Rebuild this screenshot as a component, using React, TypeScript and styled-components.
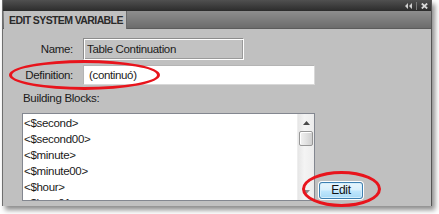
import React from 'react';
import styled, { createGlobalStyle } from 'styled-components';

const FONT = '"Liberation Sans", Arial, sans-serif';

const GlobalStyle = createGlobalStyle`
  html, body {
    margin: 0;
    padding: 0;
    background: #ffffff;
  }
  body {
    font-family: ${FONT};
  }
`;

// ===== WINDOW =====
const Page = styled.div`
  width: 439px;
  height: 214px;
  overflow: hidden;
  padding-left: 2px;
  box-sizing: border-box;
`;

const Window = styled.div`
  position: relative;
  width: 430px;
  height: 206px;
  display: flex;
  flex-direction: column;
  background: #c0c0c0;
  border-left: 1px solid #6e6e6e;
  border-right: 1px solid #555555;
  box-sizing: border-box;
  box-shadow: 3px 4px 5px rgba(0, 0, 0, 0.45);
`;

const TopBar = styled.div`
  height: 11px;
  display: flex;
  align-items: center;
  justify-content: flex-end;
  gap: 4px;
  padding-right: 3px;
  background: linear-gradient(#505050, #2c2c2c);
`;

const BarButton = styled.svg`
  display: block;
`;

const BarDivider = styled.div`
  width: 1px;
  height: 8px;
  background: #7a7a7a;
`;

const TabRow = styled.div`
  height: 17px;
  display: flex;
  background: linear-gradient(#8e8e8e, #6c6c6c);
  border-bottom: 1px solid #5c5c5c;
`;

const Tab = styled.div`
  width: 123px;
  margin-left: 1px;
  margin-bottom: -1px;
  display: flex;
  align-items: center;
  padding-left: 5px;
  box-sizing: border-box;
  background: #c0c0c0;
  border-right: 1px solid #6a6a6a;
  font-family: ${FONT};
  font-size: 10.5px;
  letter-spacing: -0.6px;
  font-weight: 700;
  color: #2a2a2a;
  white-space: nowrap;
`;

const Body = styled.div`
  flex: 1;
  display: flex;
  flex-direction: column;
  padding-top: 9px;
`;

// ===== FORM =====
const FormGrid = styled.div`
  display: grid;
  grid-template-columns: 70px 232px;
  column-gap: 10px;
  row-gap: 5px;
  align-items: center;
`;

const Label = styled.div`
  text-align: right;
  font-size: 11.5px;
  letter-spacing: -0.3px;
  color: #1a1a1a;
  white-space: nowrap;
`;

const Field = styled.div<{ $readOnly?: boolean }>`
  height: ${p => (p.$readOnly ? '22px' : '20px')};
  width: ${p => (p.$readOnly ? '161px' : '232px')};
  box-sizing: border-box;
  display: flex;
  align-items: center;
  padding-left: ${p => (p.$readOnly ? '3px' : '5px')};
  font-size: 11.5px;
  letter-spacing: -0.35px;
  color: #1a1a1a;
  white-space: nowrap;
  background: ${p => (p.$readOnly ? '#c2c2c2' : '#ffffff')};
  border: 1px solid;
  border-color: ${p => (p.$readOnly ? '#8c8c8c #ffffff #ffffff #8c8c8c' : '#b4b4b4 #d8d8d8 #d8d8d8 #b4b4b4')};
  box-shadow: ${p => (p.$readOnly ? 'inset 1px 1px 0 #ffffff, inset -1px -1px 0 #9a9a9a' : 'none')};
`;

const SectionLabel = styled(Label)`
  text-align: left;
  padding-left: 20px;
  margin-top: 6px;
  line-height: 14px;
`;

const ListRow = styled.div`
  display: flex;
  align-items: flex-end;
  margin-top: 8px;
  padding-left: 19px;
`;

const ListBox = styled.div`
  width: 293px;
  height: 88px;
  box-sizing: border-box;
  display: flex;
  background: #ffffff;
  border: 1px solid #838790;
`;

const Items = styled.div`
  flex: 1;
  overflow: hidden;
  padding: 1px 0 0 1px;
`;

const Item = styled.div`
  height: 16px;
  line-height: 16px;
  font-size: 11.5px;
  letter-spacing: -0.3px;
  color: #1a1a1a;
  white-space: nowrap;
`;

const ScrollBar = styled.div`
  width: 16px;
  display: flex;
  flex-direction: column;
  align-items: center;
  background: linear-gradient(90deg, #e6e6e6, #f4f4f4 40%, #ececec);
  border-left: 1px solid #eeeeee;
`;

const Arrow = styled.div`
  height: 17px;
  width: 100%;
  display: flex;
  align-items: center;
  justify-content: center;
`;

const Thumb = styled.div`
  width: 14px;
  height: 15px;
  box-sizing: border-box;
  border: 1px solid #979797;
  border-radius: 2px;
  background: linear-gradient(90deg, #f2f2f2, #e2e2e2 50%, #cfcfcf);
  box-shadow: inset 1px 1px 0 #ffffff;
`;

const Spacer = styled.div`
  flex: 1;
`;

const EditButton = styled.button`
  width: 44px;
  height: 17px;
  margin: 0 0 2px 4px;
  padding: 0;
  box-sizing: border-box;
  font-family: ${FONT};
  font-size: 12px;
  line-height: 13px;
  letter-spacing: -0.3px;
  color: #111111;
  border: 1px solid #3c7fb1;
  border-radius: 3px;
  background: linear-gradient(#e8f5fc 0%, #d9f0fc 45%, #bee6fd 55%, #a7d9f5 100%);
  box-shadow: inset 0 0 0 1px #d4eefc, 0 0 0 1px #ffffff;
`;

// ===== ANOTAÇÕES =====
const Highlight = styled.div<{ $left: number; $top: number; $w: number; $h: number }>`
  position: absolute;
  left: ${p => p.$left}px;
  top: ${p => p.$top}px;
  width: ${p => p.$w}px;
  height: ${p => p.$h}px;
  box-sizing: border-box;
  border: 3px solid #e8141c;
  border-radius: 50%;
  pointer-events: none;
`;

const blocks = ['<$second>', '<$second00>', '<$minute>', '<$minute00>', '<$hour>', '<$hour01>'];

const TriangleUp = () => (
  <svg width="7" height="4" viewBox="0 0 7 4">
    <path d="M3.5 0 L7 4 L0 4 Z" fill="#4a4a4a" />
  </svg>
);

const TriangleDown = () => (
  <svg width="7" height="4" viewBox="0 0 7 4">
    <path d="M0 0 L7 0 L3.5 4 Z" fill="#8a8a8a" />
  </svg>
);

export default function App() {
  return (
    <>
      <GlobalStyle />
      <Page>
        <Window>
          <TopBar>
            <BarButton width="7" height="6" viewBox="0 0 7 6">
              <path d="M3 0 L0 3 L3 6 Z M7 0 L4 3 L7 6 Z" fill="#d0d0d0" />
            </BarButton>
            <BarDivider />
            <BarButton width="7" height="6" viewBox="0 0 7 6">
              <path d="M0.8 0.5 L6.2 5.5 M6.2 0.5 L0.8 5.5" stroke="#d8d8d8" strokeWidth="1.8" />
            </BarButton>
          </TopBar>
          <TabRow>
            <Tab>EDIT SYSTEM VARIABLE</Tab>
          </TabRow>
          <Body>
            <FormGrid>
              <Label>Name:</Label>
              <Field $readOnly>Table Continuation</Field>
              <Label>Definition:</Label>
              <Field>(continuó)</Field>
            </FormGrid>
            <SectionLabel>Building Blocks:</SectionLabel>
            <ListRow>
              <ListBox>
                <Items>
                  {blocks.map(b => (
                    <Item key={b}>{b}</Item>
                  ))}
                </Items>
                <ScrollBar>
                  <Arrow>
                    <TriangleUp />
                  </Arrow>
                  <Thumb />
                  <Spacer />
                  <Arrow>
                    <TriangleDown />
                  </Arrow>
                </ScrollBar>
              </ListBox>
              <EditButton>Edit</EditButton>
            </ListRow>
          </Body>
          <Highlight $left={6} $top={60} $w={151} $h={30} />
          <Highlight $left={299} $top={171} $w={79} $h={36} />
        </Window>
      </Page>
    </>
  );
}
